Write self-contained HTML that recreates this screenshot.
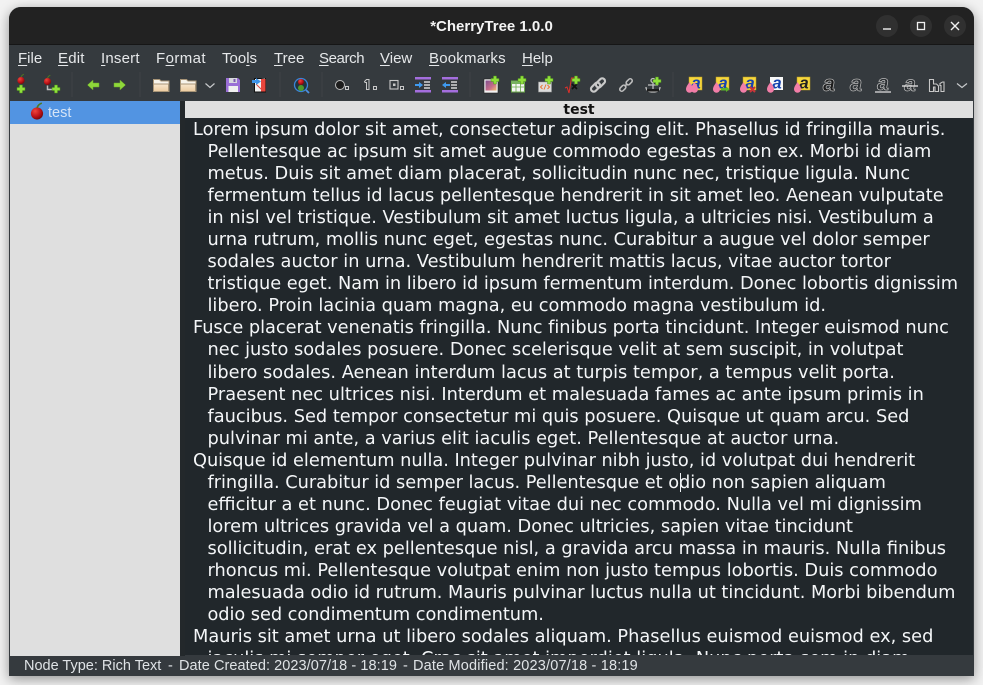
<!DOCTYPE html>
<html><head><meta charset="utf-8"><style>
*{box-sizing:border-box}
html,body{margin:0;padding:0;width:983px;height:685px;overflow:hidden;background:#f2f2f2}
.a{position:absolute}
#win{left:9px;top:7px;width:965px;height:669px;background:#353a3e;border-radius:12px 12px 0 0;box-shadow:0 3px 12px rgba(0,0,0,.4);overflow:hidden}
#ttl{left:0;top:8px;width:983px;height:40px;position:absolute;text-align:center;font:bold 15px/38px "Liberation Sans",sans-serif;color:#f4f4f4}
.m{position:absolute;top:50px;font:15px/18px "Liberation Sans",sans-serif;color:#e6e8ea;white-space:nowrap}
.m u{text-underline-offset:2px}
.s{position:absolute;top:657px;font:14.5px/18px "Liberation Sans",sans-serif;color:#dfe3e6;white-space:pre}
#ed{left:185px;top:118px;width:788px;height:537px;background:#21272b;overflow:hidden;font:17.77px/22.05px "DejaVu Sans",sans-serif;color:#f4f6f8;white-space:nowrap;padding-top:1px}
#ed p{margin:0;padding-left:8px}
#ed p span{display:block;padding-left:14.5px}
</style></head><body>
<div id="win" class="a"></div>
<div class="a" style="left:9px;top:7px;width:965px;height:38px;background:#222222;border-radius:12px 12px 0 0;border-bottom:1px solid #161616"></div>
<div id="ttl">*CherryTree 1.0.0</div>

<span class="m" style="left:18px"><u>F</u>ile</span>
<span class="m" style="left:58px;letter-spacing:.2px"><u>E</u>dit</span>
<span class="m" style="left:101px;letter-spacing:.2px"><u>I</u>nsert</span>
<span class="m" style="left:156px;letter-spacing:.4px">F<u>o</u>rmat</span>
<span class="m" style="left:222px">Too<u>l</u>s</span>
<span class="m" style="left:274px"><u>T</u>ree</span>
<span class="m" style="left:319px;letter-spacing:-.4px"><u>S</u>earch</span>
<span class="m" style="left:380px"><u>V</u>iew</span>
<span class="m" style="left:429px;letter-spacing:.2px"><u>B</u>ookmarks</span>
<span class="m" style="left:522px"><u>H</u>elp</span>

<div class="a" style="left:10px;top:101px;width:170px;height:555px;background:#dfdfdf"></div>
<div class="a" style="left:10px;top:101px;width:170px;height:23px;background:#5294e2"></div>
<div class="a" style="left:48px;top:104px;font:14.5px/18px 'Liberation Sans',sans-serif;color:#d5e4f6">test</div>
<div class="a" style="left:180px;top:101px;width:5px;height:555px;background:#23282b"></div>
<div class="a" style="left:185px;top:102px;width:788px;height:16px;background:#dfdfdf;text-align:center;font:bold 14px/16px 'DejaVu Sans',sans-serif;color:#111">test</div>
<div class="a" style="left:185px;top:101px;width:788px;height:1px;background:#dfdfdf"></div>

<div id="ed" class="a">
<p><b style="font-weight:normal;letter-spacing:.012px">Lorem ipsum dolor sit amet, consectetur adipiscing elit. Phasellus id fringilla mauris.</b><span>Pellentesque ac ipsum sit amet augue commodo egestas a non ex. Morbi id diam</span><span>metus. Duis sit amet diam placerat, sollicitudin nunc nec, tristique ligula. Nunc</span><span>fermentum tellus id lacus pellentesque hendrerit in sit amet leo. Aenean vulputate</span><span>in nisl vel tristique. Vestibulum sit amet luctus ligula, a ultricies nisi. Vestibulum a</span><span style="letter-spacing:-.025px">urna rutrum, mollis nunc eget, egestas nunc. Curabitur a augue vel dolor semper</span><span>sodales auctor in urna. Vestibulum hendrerit mattis lacus, vitae auctor tortor</span><span style="letter-spacing:-.025px">tristique eget. Nam in libero id ipsum fermentum interdum. Donec lobortis dignissim</span><span>libero. Proin lacinia quam magna, eu commodo magna vestibulum id.</span></p>
<p><b style="font-weight:normal;letter-spacing:-.035px">Fusce placerat venenatis fringilla. Nunc finibus porta tincidunt. Integer euismod nunc</b><span>nec justo sodales posuere. Donec scelerisque velit at sem suscipit, in volutpat</span><span>libero sodales. Aenean interdum lacus at turpis tempor, a tempus velit porta.</span><span>Praesent nec ultrices nisi. Interdum et malesuada fames ac ante ipsum primis in</span><span>faucibus. Sed tempor consectetur mi quis posuere. Quisque ut quam arcu. Sed</span><span>pulvinar mi ante, a varius elit iaculis eget. Pellentesque at auctor urna.</span></p>
<p><b style="font-weight:normal;letter-spacing:-.035px">Quisque id elementum nulla. Integer pulvinar nibh justo, id volutpat dui hendrerit</b><span style="letter-spacing:-.025px">fringilla. Curabitur id semper lacus. Pellentesque et odio non sapien aliquam</span><span>efficitur a et nunc. Donec feugiat vitae dui nec commodo. Nulla vel mi dignissim</span><span style="letter-spacing:-.025px">lorem ultrices gravida vel a quam. Donec ultricies, sapien vitae tincidunt</span><span>sollicitudin, erat ex pellentesque nisl, a gravida arcu massa in mauris. Nulla finibus</span><span>rhoncus mi. Pellentesque volutpat enim non justo tempus lobortis. Duis commodo</span><span style="letter-spacing:-.035px">malesuada odio id rutrum. Mauris pulvinar luctus nulla ut tincidunt. Morbi bibendum</span><span style="letter-spacing:-.06px">odio sed condimentum condimentum.</span></p>
<p>Mauris sit amet urna ut libero sodales aliquam. Phasellus euismod euismod ex, sed<span>iaculis mi semper eget. Cras sit amet imperdiet ligula. Nunc porta sem in diam</span></p>
</div>
<div class="a" style="left:680px;top:473px;width:1px;height:19px;background:#eef2f5"></div>

<div class="a" style="left:9px;top:656px;width:965px;height:20px;background:#353a3e"></div>
<div class="s" style="left:24px">Node Type: Rich Text</div>
<div class="s" style="left:168px">-</div>
<div class="s" style="left:179px;letter-spacing:.06px">Date Created: 2023/07/18 - 18:19</div>
<div class="s" style="left:403px">-</div>
<div class="s" style="left:413px;letter-spacing:.17px">Date Modified: 2023/07/18 - 18:19</div>

<svg class="a" style="left:0;top:0" width="983" height="685" viewBox="0 0 983 685">
<defs>
<radialGradient id="ch" cx=".35" cy=".3" r=".8"><stop offset="0" stop-color="#f0453c"/><stop offset=".6" stop-color="#b81016"/><stop offset="1" stop-color="#600808"/></radialGradient>
<linearGradient id="fo" x1="0" y1="0" x2="0" y2="1"><stop offset="0" stop-color="#f8e8cf"/><stop offset="1" stop-color="#eccb9f"/></linearGradient>
<linearGradient id="im" x1="0" y1="0" x2="1" y2="1"><stop offset="0" stop-color="#7d4f8f"/><stop offset=".6" stop-color="#c86d8a"/><stop offset="1" stop-color="#f0c070"/></linearGradient>
<g id="pl"><path d="M-1.500-4h3v2.500H4v3H1.500V4h-3V1.500H-4v-3h2.500z" fill="#8fe03a" stroke="#4f8f1f" stroke-width=".5"/></g>
<g id="dr"><path d="M0-5.500C2-2.500 3.500-.5 3.500 1.800a3.500 3.500 0 0 1-7 0C-3.500-.5-2-2.500 0-5.500z" fill="#f27ea8"/></g>
<g id="cl"><circle cx="0" cy="0" r="3.800" fill="url(#ch)"/><path d="M0-3.500C.5-5 1.500-6 3-6.500" stroke="#4f7a20" stroke-width="1" fill="none"/></g>
</defs>

<!-- window buttons -->
<circle cx="887" cy="26" r="11" fill="#303030"/><circle cx="921" cy="26" r="11" fill="#303030"/><circle cx="955" cy="26" r="11" fill="#303030"/>
<path d="M883 29h8" stroke="#f0f0f0" stroke-width="1.400"/>
<rect x="917.500" y="22.500" width="7" height="7" fill="none" stroke="#f0f0f0" stroke-width="1.300"/>
<path d="M951 22l8 8M959 22l-8 8" stroke="#f0f0f0" stroke-width="1.400"/>

<!-- separators -->
<g stroke="#3e4347"><path d="M72 72v25M140 72v25M280 72v25M322 72v25M470 72v25M673 72v25"/></g>

<!-- tree cherry -->
<use href="#cl" transform="translate(37 113.500) scale(1.600)"/>

<!-- node -->
<use href="#cl" transform="translate(21 80.500) scale(.95)"/><use href="#pl" transform="translate(21 89)"/>
<path d="M47.500 85.500v4h8" stroke="#bdbdbd" stroke-width="1.500" fill="none"/>
<use href="#cl" transform="translate(47.500 81.500) scale(.95)"/><use href="#pl" transform="translate(56 89)"/>

<!-- arrows -->
<path d="M87.500 85l5.500-5v3h6v4h-6v3z" fill="#8fd83a" stroke="#6aa82a" stroke-width=".5"/>
<path d="M125.500 85l-5.500-5v3h-6v4h6v3z" fill="#8fd83a" stroke="#6aa82a" stroke-width=".5"/>

<!-- folders -->
<path d="M153.500 91.500v-12h6l1.500 1.500h8v10.500z" fill="#f7f3ea" stroke="#a89578"/><rect x="153.500" y="84" width="15" height="7.500" fill="url(#fo)" stroke="#a89578"/>
<path d="M180.500 91.500v-12h6l1.500 1.500h8v10.500z" fill="#f7f3ea" stroke="#a89578"/><rect x="180.500" y="84" width="15" height="7.500" fill="url(#fo)" stroke="#a89578"/>
<path d="M205.500 83.500l4.500 4 4.500-4" stroke="#c8cacc" stroke-width="1.200" fill="none"/>

<!-- save -->
<path d="M226 78h12l2 2v12h-14z" fill="#9a6fd6"/><rect x="229" y="78" width="8" height="5" fill="#d8d8de"/><rect x="233.500" y="79" width="2" height="3" fill="#7a5ab0"/><rect x="228.500" y="86" width="9.500" height="6" fill="#f0f0f0"/>

<!-- quit -->
<path d="M254 78h12v14.500h-12z" fill="#111"/><path d="M255 79h6l4-.500v13h-10z" fill="#f3f3f3"/><path d="M261 79h4.500v12.500H261z" fill="#e8453c"/><path d="M256 84l7 7" stroke="#e04a40" stroke-width="1"/><path d="M252 80h4v-2l5 3.500-5 3.500v-2h-4z" fill="#3d93e8"/>

<!-- find -->
<circle cx="301" cy="85" r="6.500" fill="#22343f" stroke="#3b85d8" stroke-width="1.300"/><circle cx="301" cy="82" r="3" fill="url(#ch)"/><circle cx="301" cy="88" r="3" fill="#4f9a2a"/><path d="M306 90l3 3" stroke="#4a90e0" stroke-width="1.800"/>

<!-- lists -->
<circle cx="340" cy="85" r="4.500" fill="#1c1c1c" stroke="#bcbcbc" stroke-width="1"/><rect x="345.500" y="86.500" width="3" height="3" fill="none" stroke="#c8c8c8"/>
<path d="M364.500 81.500l2-2h2.500v10h-2.500v-7h-1.500z" fill="none" stroke="#c8c8c8" stroke-width="1"/><rect x="373.500" y="86.500" width="3" height="3" fill="none" stroke="#c8c8c8"/>
<rect x="390" y="80.500" width="8" height="8.500" fill="none" stroke="#c8c8c8" stroke-width="1.100"/><rect x="393" y="83.500" width="2.500" height="2.500" fill="#c8c8c8"/><rect x="400.500" y="86.500" width="3" height="3" fill="none" stroke="#c8c8c8"/>

<!-- indents -->
<g fill="#a46ede"><rect x="415" y="77" width="16" height="2.500"/><rect x="415" y="90" width="16" height="2.500"/><rect x="442" y="77" width="16" height="2.500"/><rect x="442" y="90" width="16" height="2.500"/></g>
<path d="M415 84h4v-2l4 3-4 3v-2h-4z" fill="#3f9aef"/><path d="M424 82h6M424 88h6M424 85h6" stroke="#f5f5f5" stroke-width="1.200"/>
<path d="M450 84h-4v-2l-4 3 4 3v-2h4z" fill="#3f9aef"/><path d="M451 82h6M451 88h6M451 85h6" stroke="#f5f5f5" stroke-width="1.200"/>

<!-- image -->
<rect x="484" y="79" width="14" height="14" fill="#f2f2f2" stroke="#222" stroke-width=".6"/><rect x="485.500" y="80.500" width="11" height="10" fill="url(#im)"/><use href="#pl" transform="translate(495 80)"/>
<!-- table -->
<rect x="511.500" y="81" width="13" height="11" fill="#f5f5f5" stroke="#6aa84a"/><rect x="511.500" y="81" width="13" height="3" fill="#78b060"/><path d="M511.500 87h13M516 84v8M520.500 84v8" stroke="#6aa84a" stroke-width=".8"/><use href="#pl" transform="translate(522 80)"/>
<!-- code -->
<rect x="538.500" y="82" width="13" height="10" fill="#dcdcdc" stroke="#999" stroke-width=".5"/><path d="M542.500 85l-2 2 2 2M547.500 85l2 2-2 2M546 84.500l-2 5" stroke="#e8702a" stroke-width=".9" fill="none"/><use href="#pl" transform="translate(549 80)"/>
<!-- formula -->
<path d="M565 88l2-1 2 6 2.500-15h7" stroke="#e0302a" stroke-width="1" fill="none"/><path d="M572 84l5 5M577 84l-5 5" stroke="#111" stroke-width="1.600"/><use href="#pl" transform="translate(576 80)"/>
<!-- link -->
<g transform="rotate(-45 598 85)" fill="none" stroke="#c9c9c9" stroke-width="2.200"><rect x="589.500" y="82" width="10.500" height="5.500" rx="2.700"/><rect x="596" y="82.500" width="10.500" height="5.500" rx="2.700"/></g>
<g transform="rotate(-45 626 85)" fill="none" stroke="#c0c0c0" stroke-width="1.500"><rect x="618" y="83" width="7" height="4" rx="2"/><rect x="627" y="83" width="7" height="4" rx="2"/><path d="M624 85h4"/></g>
<!-- anchor -->
<g fill="none" stroke="#c0c0c0" stroke-width="1.300"><circle cx="653" cy="80.500" r="2"/><path d="M653 82.500v9M648 85h10M646 87c0 3.500 3 5 7 5s7-1.500 7-5"/></g><rect x="647" y="89" width="12" height="2.500" fill="#1c1c1c"/><use href="#pl" transform="translate(657 81)"/>

<!-- a icons -->
<g font-family="'Liberation Sans',sans-serif" font-weight="bold" font-style="italic" font-size="17" text-anchor="middle">
<rect x="689" y="77" width="13" height="13" fill="#f6d63c" stroke="#b89a20" stroke-width=".5"/><text x="696" y="88.500" fill="#1844b0">a</text><use href="#dr" transform="translate(689.500 87.500)"/><use href="#dr" transform="translate(694.500 87.500)"/>
<rect x="716" y="77" width="13" height="13" fill="#f6d63c" stroke="#b89a20" stroke-width=".5"/><text x="723" y="88.500" fill="#1844b0">a</text><use href="#dr" transform="translate(716.500 87.500)"/><path d="M721 88h5v-1.500l3.500 2.700-3.500 2.800v-1.500h-5z" fill="#5cb52c"/>
<rect x="743" y="77" width="13" height="13" fill="#f6d63c" stroke="#b89a20" stroke-width=".5"/><text x="750" y="88.500" fill="#1844b0">a</text><use href="#dr" transform="translate(743.500 87.500)"/><path d="M750 87l5 5M755 87l-5 5" stroke="#c8343a" stroke-width="2"/>
<rect x="770" y="77" width="13" height="13" fill="#f8f8f8"/><text x="777" y="88.500" fill="#1844b0">a</text><use href="#dr" transform="translate(770.500 87.500)"/>
<rect x="797" y="77" width="13" height="13" fill="#f6d63c" stroke="#b89a20" stroke-width=".5"/><text x="804" y="88.500" fill="#222">a</text><use href="#dr" transform="translate(797.500 87.500)"/>
<text x="829" y="91" font-size="22" fill="#1c1c1c" stroke="#b8b8b8" stroke-width=".7">a</text>
<text x="856" y="91" font-size="22" fill="#2b2f32" stroke="#b8b8b8" stroke-width=".7">a</text>
<text x="883" y="90" font-size="21" fill="#2b2f32" stroke="#c0c0c0" stroke-width=".7">a</text>
<text x="910" y="91" font-size="21" fill="#2b2f32" stroke="#c0c0c0" stroke-width=".7">a</text>
</g>
<path d="M875 92h16" stroke="#d0d0d0" stroke-width="1.400"/>
<path d="M902 86h16" stroke="#d8d8d8" stroke-width="1.400"/>
<g fill="#2b2f32" stroke="#c8c8c8" stroke-width="1.100"><path d="M929.500 79.500h4v4.500h3l2 2v5.500h-3.500V87h-1.500v4.500h-4z"/><path d="M940 83.500l2.500-1.500h1.500v9.500h-3V85.500h-1z"/></g>
<path d="M957 83.500l5 4 5-4" stroke="#c8cacc" stroke-width="1.200" fill="none"/>
</svg>
</body></html>
